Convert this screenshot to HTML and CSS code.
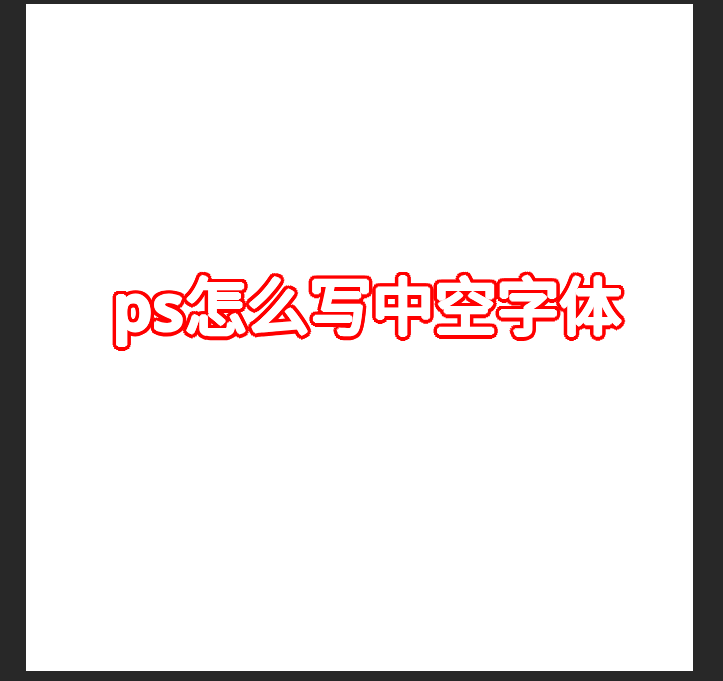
FILE: index.html
```html
<!DOCTYPE html>
<html lang="zh">
<head>
  <meta charset="UTF-8" />
  <title>ps怎么写中空字体</title>
  <link rel="stylesheet" href="styles.css">
</head>
<body>

<div class="workspace">
  <div class="canvas">
    <h1 class="hollow-text"><span class="latin">ps</span>怎么写中空字体</h1>
  </div>
</div>

</body>
</html>
```

FILE: styles.css
```css
html, body {
  margin: 0;
  height: 100%;
}
body {
  background-color: #282828;
  overflow: hidden;
}
.workspace {
  height: 681px;
  box-sizing: border-box;
  padding: 4px 30px 10px 26px;
}
.canvas {
  height: 100%;
  box-sizing: border-box;
  padding: 259px 0 0 87px;
  background-color: white;
}
.hollow-text {
  margin: 0;
  font-family: "Open Sans", "Noto Sans CJK SC", sans-serif;
  font-size: 62.5px;
  line-height: 86px;
  font-weight: 400;
  color: white;
  white-space: nowrap;
  /* white ring on top of a red ring gives the rounded hollow outline */
  text-shadow:
    2px 0 0 white, -2px 0 0 white, 0 2px 0 white, 0 -2px 0 white,
    1.4px 1.4px 0 white, -1.4px 1.4px 0 white, 1.4px -1.4px 0 white, -1.4px -1.4px 0 white,
    5.5px 0 0 red, -5.5px 0 0 red, 0 5.5px 0 red, 0 -5.5px 0 red,
    3.9px 3.9px 0 red, -3.9px 3.9px 0 red, 3.9px -3.9px 0 red, -3.9px -3.9px 0 red,
    5px 2.1px 0 red, -5px 2.1px 0 red, 5px -2.1px 0 red, -5px -2.1px 0 red,
    2.1px 5px 0 red, -2.1px 5px 0 red, 2.1px -5px 0 red, -2.1px -5px 0 red,
    3.5px 0 0 red, -3.5px 0 0 red, 0 3.5px 0 red, 0 -3.5px 0 red,
    2.5px 2.5px 0 red, -2.5px 2.5px 0 red, 2.5px -2.5px 0 red, -2.5px -2.5px 0 red;
}
.latin {
  font-weight: 600;
  letter-spacing: 1px;
}
```
